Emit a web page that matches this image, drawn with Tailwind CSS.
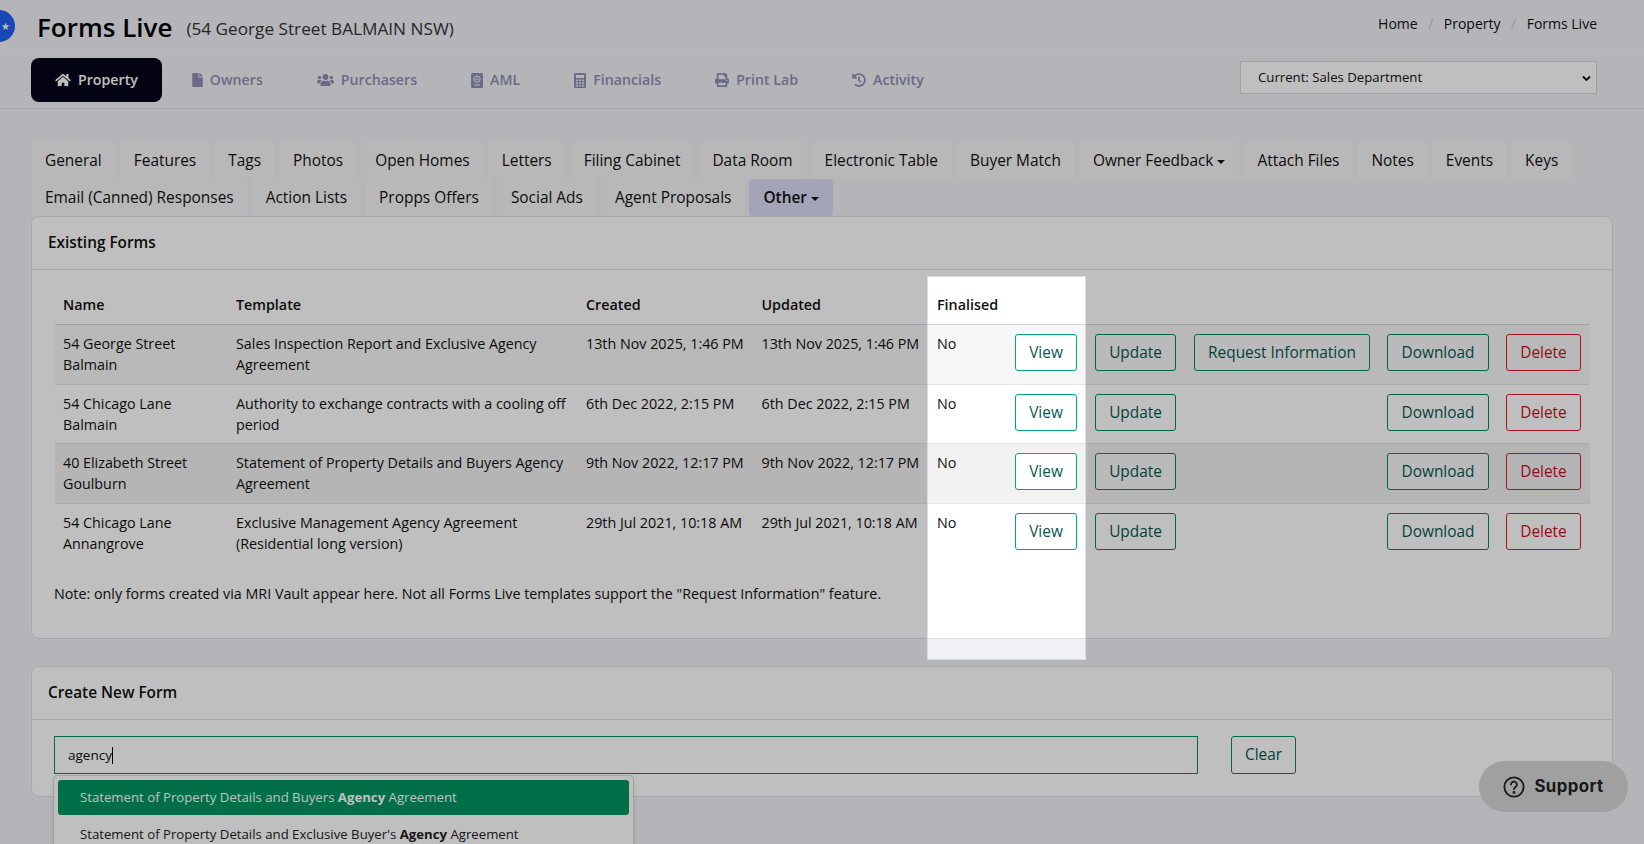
<!DOCTYPE html>
<html lang="en">
<head>
    <meta charset="UTF-8">
    <title>Forms Live</title>
    <script src="https://cdn.jsdelivr.net/npm/@tailwindcss/browser@4"></script>
</head>
<body class="relative h-[844px] w-[1644px] overflow-hidden bg-[#f0f1f7] font-['Open_Sans',sans-serif] text-[#111] antialiased">

    <!-- Page title and breadcrumb -->
    <header class="flex h-[53px] items-center border-b border-[#fbfbff] pr-[47px]">
        <div class="ml-[-17px] flex h-8 w-8 items-center justify-end rounded-full bg-[#2161f2] pr-[5px] text-[10px] leading-none text-white">★</div>
        <h1 class="mt-[1px] ml-[22px] text-[26px] leading-none font-semibold text-black">Forms Live</h1>
        <span class="mt-[5px] ml-[14px] text-[17.2px] text-[#333]">(54 George Street BALMAIN NSW)</span>
        <nav class="mb-[4px] ml-auto flex items-center gap-[10.5px] text-sm text-[#111]">
            <span>Home</span><span class="text-[#c8c8cc]">/</span><span>Property</span><span class="text-[#c8c8cc]">/</span><span>Forms Live</span>
        </nav>
    </header>

    <!-- Main nav -->
    <div class="flex h-[56px] items-start border-b border-[#e2e3e8] pt-[5px] pr-[47px] pl-[31px]">
        <div class="flex gap-[6px] text-[14.2px] font-semibold text-[#8e8fb0]">
            <a class="flex h-[44px] items-center gap-[7px] rounded-lg bg-[#04041a] px-6 text-white">
                <svg class="h-[14px] w-[16px] fill-current" viewBox="0 0 576 512"><path d="M280.37 148.26L96 300.11V464a16 16 0 0 0 16 16l112.06-.29a16 16 0 0 0 15.92-16V368a16 16 0 0 1 16-16h64a16 16 0 0 1 16 16v95.64a16 16 0 0 0 16 16.05L464 480a16 16 0 0 0 16-16V300L295.67 148.26a12.19 12.19 0 0 0-15.3 0zM571.6 251.47L488 182.56V44.05a12 12 0 0 0-12-12h-56a12 12 0 0 0-12 12v72.61L318.47 43a48 48 0 0 0-61 0L4.34 251.47a12 12 0 0 0-1.6 16.9l25.5 31A12 12 0 0 0 45.15 301l235.22-193.74a12.19 12.19 0 0 1 15.3 0L530.9 301a12 12 0 0 0 16.9-1.6l25.5-31a12 12 0 0 0-1.7-16.93z"/></svg>
                Property
            </a>
            <a class="flex h-[44px] items-center gap-[7px] px-6">
                <svg class="h-[14px] w-[11px] fill-current" viewBox="0 0 384 512"><path d="M224 136V0H24C10.7 0 0 10.7 0 24v464c0 13.3 10.7 24 24 24h336c13.3 0 24-10.7 24-24V160H248c-13.2 0-24-10.8-24-24zm160-14.1v6.1H256V0h6.1c6.4 0 12.5 2.5 17 7l97.9 98c4.5 4.5 7 10.6 7 16.9z"/></svg>
                Owners
            </a>
            <a class="flex h-[44px] items-center gap-[7px] px-6">
                <svg class="h-[14px] w-[17px] fill-current" viewBox="0 0 640 512"><path d="M96 224c35.3 0 64-28.7 64-64s-28.7-64-64-64-64 28.7-64 64 28.7 64 64 64zm448 0c35.3 0 64-28.7 64-64s-28.7-64-64-64-64 28.7-64 64 28.7 64 64 64zm32 32h-64c-17.6 0-33.5 7.1-45.1 18.6 40.3 22.1 68.9 62 75.1 109.4h66c17.7 0 32-14.3 32-32v-32c0-35.3-28.7-64-64-64zm-256 0c61.9 0 112-50.1 112-112S381.9 32 320 32 208 82.1 208 144s50.1 112 112 112zm76.8 32h-8.3c-20.8 10-43.9 16-68.5 16s-47.6-6-68.5-16h-8.3C179.6 288 128 339.6 128 403.2V432c0 26.5 21.5 48 48 48h288c26.5 0 48-21.5 48-48v-28.8c0-63.6-51.6-115.2-115.2-115.2zm-223.7-13.4C161.5 263.1 145.6 256 128 256H64c-35.3 0-64 28.7-64 64v32c0 17.7 14.3 32 32 32h65.9c6.3-47.4 34.9-87.3 75.2-109.4z"/></svg>
                Purchasers
            </a>
            <a class="flex h-[44px] items-center gap-[7px] px-6">
                <svg class="h-[15px] w-[12px]" viewBox="0 0 12 15"><rect width="12" height="15" rx="1.5" class="fill-current"/><circle cx="6" cy="6.2" r="3.2" fill="none" stroke="#f0f1f7" stroke-width="1"/><path d="M6 3v6.4M2.8 6.2h6.4" stroke="#f0f1f7" stroke-width=".6"/><rect x="3" y="11.5" width="6" height="1" fill="#f0f1f7"/></svg>
                AML
            </a>
            <a class="flex h-[44px] items-center gap-[7px] px-6">
                <svg class="h-[15px] w-[12px]" viewBox="0 0 12 15"><rect width="12" height="15" rx="1.5" class="fill-current"/><rect x="2" y="2" width="8" height="3" fill="#f0f1f7"/><g fill="#f0f1f7"><rect x="2" y="6.5" width="2" height="1.6"/><rect x="5" y="6.5" width="2" height="1.6"/><rect x="8" y="6.5" width="2" height="1.6"/><rect x="2" y="9.2" width="2" height="1.6"/><rect x="5" y="9.2" width="2" height="1.6"/><rect x="8" y="9.2" width="2" height="1.6"/><rect x="2" y="11.9" width="2" height="1.6"/><rect x="5" y="11.9" width="2" height="1.6"/><rect x="8" y="11.9" width="2" height="1.6"/></g></svg>
                Financials
            </a>
            <a class="flex h-[44px] items-center gap-[7px] px-6">
                <svg class="h-[14px] w-[14px] fill-current" viewBox="0 0 512 512"><path d="M448 192V77.25c0-8.49-3.37-16.62-9.37-22.63L393.37 9.37c-6-6-14.14-9.37-22.63-9.37H96C78.33 0 64 14.33 64 32v160c-35.35 0-64 28.65-64 64v112c0 8.84 7.16 16 16 16h48v96c0 17.67 14.33 32 32 32h320c17.67 0 32-14.33 32-32v-96h48c8.84 0 16-7.16 16-16V256c0-35.35-28.65-64-64-64zm-64 256H128v-96h256v96zm0-224H128V64h192v48c0 8.84 7.16 16 16 16h48v96zm48 72c-13.25 0-24-10.75-24-24 0-13.26 10.75-24 24-24s24 10.74 24 24c0 13.25-10.75 24-24 24z"/></svg>
                Print Lab
            </a>
            <a class="flex h-[44px] items-center gap-[7px] px-6">
                <svg class="h-[14px] w-[14px] fill-current" viewBox="0 0 512 512"><path d="M504 255.531c.253 136.64-111.18 248.372-247.82 248.468-59.015.042-113.223-20.53-155.822-54.911-11.077-8.94-11.905-25.541-1.839-35.607l11.267-11.267c8.609-8.609 22.353-9.551 31.891-1.984C173.062 425.135 212.781 440 256 440c101.705 0 184-82.311 184-184 0-101.705-82.311-184-184-184-48.814 0-93.149 18.969-126.068 49.932l50.754 50.754c10.08 10.08 2.941 27.314-11.313 27.314H24c-8.837 0-16-7.163-16-16V38.627c0-14.254 17.234-21.393 27.314-11.314l49.372 49.372C129.209 34.136 189.552 8 256 8c136.81 0 247.747 110.78 248 247.531zm-180.912 78.784l9.823-12.63c8.138-10.463 6.253-25.542-4.21-33.679L288 256.349V152c0-13.255-10.745-24-24-24h-16c-13.255 0-24 10.745-24 24v135.651l65.409 50.874c10.463 8.137 25.541 6.253 33.679-4.21z"/></svg>
                Activity
            </a>
        </div>
        <div class="relative mt-[3px] ml-auto w-[357px]">
            <select class="h-[33px] w-full appearance-none border border-[#d6d7dc] bg-white pl-[17px] text-[13.2px] text-[#111]">
                <option>Current: Sales Department</option>
            </select>
            <svg class="absolute top-[14px] right-[6px] h-[7px] w-[9px]" viewBox="0 0 9 7"><path d="M1 1.5l3.5 3.5L8 1.5" fill="none" stroke="#111" stroke-width="1.8"/></svg>
        </div>
    </div>

    <main class="pr-[31px] pl-[31px]">
        <!-- Tabs -->
        <div class="mt-[33px] flex flex-wrap gap-x-[4px] text-[15.43px] text-[#111]">
            <a class="flex h-[37px] items-center rounded-t bg-[#f6f6f6] px-[14px]">General</a>
            <a class="flex h-[37px] items-center rounded-t bg-[#f6f6f6] px-[14px]">Features</a>
            <a class="flex h-[37px] items-center rounded-t bg-[#f6f6f6] px-[14px]">Tags</a>
            <a class="flex h-[37px] items-center rounded-t bg-[#f6f6f6] px-[14px]">Photos</a>
            <a class="flex h-[37px] items-center rounded-t bg-[#f6f6f6] px-[14px]">Open Homes</a>
            <a class="flex h-[37px] items-center rounded-t bg-[#f6f6f6] px-[14px]">Letters</a>
            <a class="flex h-[37px] items-center rounded-t bg-[#f6f6f6] px-[14px]">Filing Cabinet</a>
            <a class="flex h-[37px] items-center rounded-t bg-[#f6f6f6] px-[14px]">Data Room</a>
            <a class="flex h-[37px] items-center rounded-t bg-[#f6f6f6] px-[14px]">Electronic Table</a>
            <a class="flex h-[37px] items-center rounded-t bg-[#f6f6f6] px-[14px]">Buyer Match</a>
            <a class="flex h-[37px] items-center gap-1 rounded-t bg-[#f6f6f6] px-[14px]">Owner Feedback <span class="mt-[2px] border-x-[4px] border-t-[4px] border-x-transparent border-t-[#111]"></span></a>
            <a class="flex h-[37px] items-center rounded-t bg-[#f6f6f6] px-[14px]">Attach Files</a>
            <a class="flex h-[37px] items-center rounded-t bg-[#f6f6f6] px-[14px]">Notes</a>
            <a class="flex h-[37px] items-center rounded-t bg-[#f6f6f6] px-[14px]">Events</a>
            <a class="flex h-[37px] items-center rounded-t bg-[#f6f6f6] px-[14px]">Keys</a>
            <a class="flex h-[37px] items-center rounded-t bg-[#f6f6f6] px-[14px]">Email (Canned) Responses</a>
            <a class="flex h-[37px] items-center rounded-t bg-[#f6f6f6] px-[14px]">Action Lists</a>
            <a class="flex h-[37px] items-center rounded-t bg-[#f6f6f6] px-[14px]">Propps Offers</a>
            <a class="flex h-[37px] items-center rounded-t bg-[#f6f6f6] px-[14px]">Social Ads</a>
            <a class="flex h-[37px] items-center rounded-t bg-[#f6f6f6] px-[14px]">Agent Proposals</a>
            <a class="flex h-[37px] items-center gap-1 rounded bg-[#dadbf5] px-[14px] font-semibold">Other <span class="mt-[2px] border-x-[4px] border-t-[4px] border-x-transparent border-t-[#111]"></span></a>
        </div>

        <!-- Existing forms -->
        <section class="h-[423px] rounded-lg border border-[#dfe0e5] bg-white">
            <div class="flex h-[53px] items-center border-b border-[#dfe0e5] px-4 text-[15.36px] font-semibold">Existing Forms</div>
            <div class="pt-[3px] pr-[21px] pl-[22px]">
                <table class="ml-[1px] w-[1535px] table-fixed border-collapse text-left text-[14.3px] leading-[21px] text-[#111]">
                    <colgroup>
                        <col class="w-[173px]"><col class="w-[350px]"><col class="w-[175.5px]"><col class="w-[175.5px]"><col class="w-[78px]">
                        <col class="w-[80px]"><col class="w-[99px]"><col class="w-[193px]"><col class="w-[119px]"><col class="w-[92px]">
                    </colgroup>
                    <thead>
                        <tr class="h-[51px] border-b border-[#d5d5d8] font-semibold">
                            <th class="px-2 pt-[12px] font-semibold">Name</th>
                            <th class="px-2 pt-[12px] font-semibold">Template</th>
                            <th class="px-2 pt-[12px] font-semibold">Created</th>
                            <th class="px-2 pt-[12px] font-semibold">Updated</th>
                            <th class="px-2 pt-[12px] font-semibold" colspan="2">Finalised</th>
                            <th></th><th></th><th></th><th></th>
                        </tr>
                    </thead>
                    <tbody class="[&_button]:mt-[1px] [&_button]:pt-[1px] [&_td]:px-2 [&_td]:pt-[8px] [&_td]:align-top">
                        <tr class="h-[60px] border-b border-[#e4e4e6] bg-[#f7f7f7]">
                            <td>54 George Street Balmain</td>
                            <td>Sales Inspection Report and Exclusive Agency Agreement</td>
                            <td>13th Nov 2025, 1:46 PM</td>
                            <td>13th Nov 2025, 1:46 PM</td>
                            <td>No</td>
                            <td><button class="h-[37px] w-[62px] rounded-[3px] border border-[#00a585] bg-white text-[15.4px] text-[#05594f]">View</button></td>
                            <td><button class="h-[37px] w-[81px] rounded-[3px] border border-[#008a5e] bg-white/10 text-[15.4px] text-[#05594f]">Update</button></td>
                            <td><button class="h-[37px] w-[176px] rounded-[3px] border border-[#008a5e] bg-white/10 text-[15.4px] text-[#05594f]">Request Information</button></td>
                            <td><button class="h-[37px] w-[102px] rounded-[3px] border border-[#008a5e] bg-white/10 text-[15.4px] text-[#05594f]">Download</button></td>
                            <td><button class="h-[37px] w-[75px] rounded-[3px] border border-[#e8142d] text-[15.4px] text-[#c9102a]">Delete</button></td>
                        </tr>
                        <tr class="h-[59px] border-b border-[#e4e4e6]">
                            <td>54 Chicago Lane Balmain</td>
                            <td>Authority to exchange contracts with a cooling off period</td>
                            <td>6th Dec 2022, 2:15 PM</td>
                            <td>6th Dec 2022, 2:15 PM</td>
                            <td>No</td>
                            <td><button class="h-[37px] w-[62px] rounded-[3px] border border-[#00a585] bg-white text-[15.4px] text-[#05594f]">View</button></td>
                            <td><button class="h-[37px] w-[81px] rounded-[3px] border border-[#008a5e] text-[15.4px] text-[#05594f]">Update</button></td>
                            <td></td>
                            <td><button class="h-[37px] w-[102px] rounded-[3px] border border-[#008a5e] text-[15.4px] text-[#05594f]">Download</button></td>
                            <td><button class="h-[37px] w-[75px] rounded-[3px] border border-[#e8142d] text-[15.4px] text-[#c9102a]">Delete</button></td>
                        </tr>
                        <tr class="h-[60px] border-b border-[#e4e4e6] bg-[#f2f2f2]">
                            <td>40 Elizabeth Street Goulburn</td>
                            <td>Statement of Property Details and Buyers Agency Agreement</td>
                            <td>9th Nov 2022, 12:17 PM</td>
                            <td>9th Nov 2022, 12:17 PM</td>
                            <td>No</td>
                            <td><button class="h-[37px] w-[62px] rounded-[3px] border border-[#00a585] bg-white text-[15.4px] text-[#05594f]">View</button></td>
                            <td><button class="h-[37px] w-[81px] rounded-[3px] border border-[#008a5e] bg-white/50 text-[15.4px] text-[#05594f]">Update</button></td>
                            <td></td>
                            <td><button class="h-[37px] w-[102px] rounded-[3px] border border-[#008a5e] bg-white/50 text-[15.4px] text-[#05594f]">Download</button></td>
                            <td><button class="h-[37px] w-[75px] rounded-[3px] border border-[#e8142d] text-[15.4px] text-[#c9102a]">Delete</button></td>
                        </tr>
                        <tr class="h-[60px]">
                            <td>54 Chicago Lane Annangrove</td>
                            <td>Exclusive Management Agency Agreement (Residential long version)</td>
                            <td>29th Jul 2021, 10:18 AM</td>
                            <td>29th Jul 2021, 10:18 AM</td>
                            <td>No</td>
                            <td><button class="h-[37px] w-[62px] rounded-[3px] border border-[#00a585] bg-white text-[15.4px] text-[#05594f]">View</button></td>
                            <td><button class="h-[37px] w-[81px] rounded-[3px] border border-[#008a5e] text-[15.4px] text-[#05594f]">Update</button></td>
                            <td></td>
                            <td><button class="h-[37px] w-[102px] rounded-[3px] border border-[#008a5e] text-[15.4px] text-[#05594f]">Download</button></td>
                            <td><button class="h-[37px] w-[75px] rounded-[3px] border border-[#e8142d] text-[15.4px] text-[#c9102a]">Delete</button></td>
                        </tr>
                    </tbody>
                </table>
                <p class="mt-[20px] text-[14.3px] text-[#111]">Note: only forms created via MRI Vault appear here. Not all Forms Live templates support the "Request Information" feature.</p>
            </div>
        </section>

        <!-- Create new form -->
        <section class="mt-[27px] h-[131px] rounded-lg border border-[#dfe0e5] bg-white">
            <div class="flex h-[53px] items-center border-b border-[#dfe0e5] px-4 text-[15.36px] font-semibold">Create New Form</div>
            <div class="flex gap-[33px] pt-[16px] pl-[22px]">
                <div class="flex h-[38px] w-[1144px] items-center border border-[#00925f] pl-[13px] text-[13.5px] text-[#111]">agency<span class="h-[17px] w-px bg-black"></span></div>
                <button class="h-[38px] w-[65px] rounded-[3px] border border-[#008a5e] text-[15.4px] text-[#05594f]">Clear</button>
            </div>
        </section>
    </main>

    <!-- Autocomplete list -->
    <ul class="absolute top-[775px] left-[53px] h-[80px] w-[581px] rounded border border-[#d8d8d8] bg-white p-1 text-[13.2px] text-[#222] shadow-md">
        <li class="flex h-[35px] items-center rounded-[3px] bg-[#019560] pl-[22px] text-white">Statement of Property Details and Buyers&nbsp;<b>Agency</b>&nbsp;Agreement</li>
        <li class="flex h-[40px] items-center pl-[22px]">Statement of Property Details and Exclusive Buyer's&nbsp;<b>Agency</b>&nbsp;Agreement</li>
    </ul>

    <!-- Support launcher -->
    <button class="absolute top-[761px] left-[1479px] flex h-[51px] w-[149px] items-center justify-center gap-[9px] rounded-[26px] bg-[#d6d6d6] font-['Inter',sans-serif] text-[16.8px] font-bold tracking-wide text-[#222]">
        <svg class="h-[22px] w-[22px]" viewBox="0 0 24 24" fill="none" stroke="#222" stroke-width="2"><circle cx="12" cy="12" r="10.5"/><path d="M8.8 9.2a3.2 3.2 0 1 1 4.8 2.8c-1 .6-1.6 1.2-1.6 2.4" stroke-linecap="round"/><circle cx="12" cy="18" r=".6" fill="#222"/></svg>
        Support
    </button>

    <!-- Tour spotlight: the shadow dims everything around the highlighted column -->
    <div class="absolute top-[276px] left-[927px] h-[384px] w-[159px] border border-[#dcdce2] shadow-[0_0_0_2000px_rgba(0,0,0,0.25)]"></div>
</body>
</html>
